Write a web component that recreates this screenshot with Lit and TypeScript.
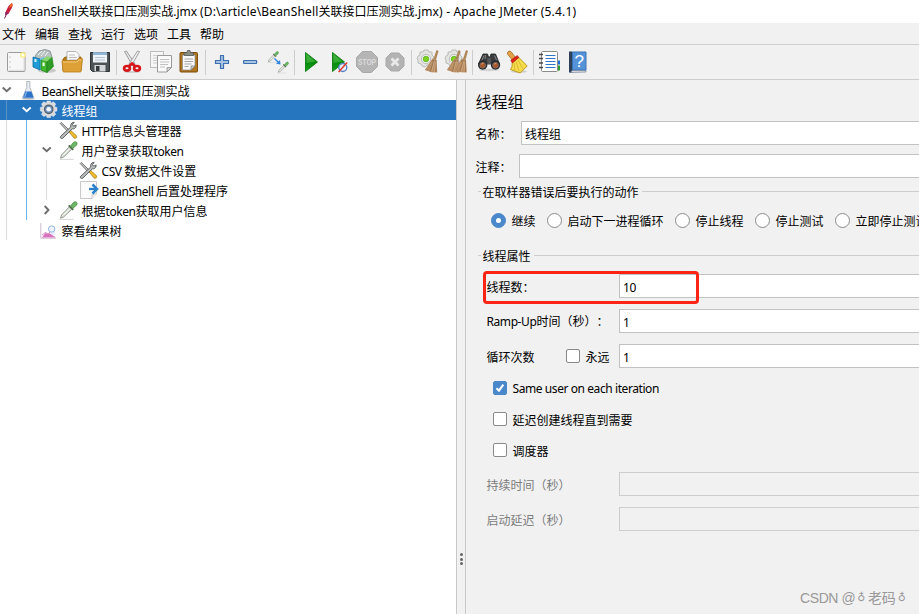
import { LitElement, html, svg, css, nothing } from "lit";
import { customElement, property } from "lit/decorators.js";
import { classMap } from "lit/directives/class-map.js";

/* Latin runs get their own span so that tracking never touches the CJK grid. */
const mix = (s: string) =>
  s.split(/([\x20-\x7e]+)/).filter(Boolean).map((p) => (/^[\x20-\x7e]/.test(p) ? html`<span class="lat">${p}</span>` : p));

const gear = svg`
  <path d="M4 8l2-1 0-3 3 0 1-2 4 0 1 2 3 0 0 3 2 2-1 4-2 1-1 3-3 0-2 2-3-1-1-2-3-1 0-3-1-1z" fill="#e3e3e1" stroke="#b0b0ae" stroke-width=".8"/>
  <circle cx="12" cy="11" r="4.600" fill="#f6f6f5" stroke="#a9a9a7" stroke-width=".7"/>
  <circle cx="12" cy="11" r="2.800" fill="#7ed321" stroke="#5db01c" stroke-width=".8"/>`;
const brush = (dx: number) => svg`<g transform="translate(${dx} 0)">
  <path d="M22.600 2.500l1.600.5-2.400 8.500-2-.5z" fill="#b58a55" stroke="#8a6437" stroke-width=".4"/>
  <path d="M18.500 10.500l4 1.200.8 12.800-6-.3-6.500-2.200z" fill="#b98e64"/>
  <path d="M18.800 12l-5.400 10.200M19.900 12l-3.600 11.400M21.900 12l-.2 11.800" stroke="#86623d" stroke-width=".6" fill="none"/>
  <path d="M18 13.800l-4.200 7.800M20.300 13l-2.500 10.400M21.500 14l-1 9.600" stroke="#d9b88f" stroke-width=".6" fill="none"/></g>`;
const pipette = (t: string) => svg`<g transform=${t}>
  <path d="M1 19.400h14" stroke="#cbcbcb" stroke-width=".8"/>
  <path d="M2 18.200l1-3.200L11 6.600l2.400 2.400L5.200 17z" fill="#d9dfd6" stroke="#8c938a" stroke-width=".9"/>
  <path d="M4.500 15.500l6-6.200" stroke="#fff" stroke-width="1"/>
  <path d="M10.200 5.400l4.500 4.500" stroke="#4d6a4b" stroke-width="1.700"/>
  <path d="M12 6l3.200-3.800q1.700-1 2.800 0 1.200 1.200 0 3L14.300 8.300z" fill="#6db865" stroke="#478a42" stroke-width=".8"/></g>`;
const play = svg`<path d="M8.500 4.500L20.500 14 8.500 23.500z" fill="url(#pg)" stroke="#0c7a12" stroke-width=".9"/>
  <path d="M9.500 6.500L18.500 13.600 9.500 15z" fill="#55c04e" opacity=".55"/>`;

const icons: Record<string, unknown> = {
  new: svg`<rect x="5.500" y="4.500" width="17.500" height="19" rx="1" fill="#f7f7f7" stroke="#9b9b9b"/>
    <path d="M6.500 22.300h15.500v-16" stroke="#dedede" fill="none"/>
    <circle cx="8" cy="9" r=".7" fill="#bbb"/><circle cx="8" cy="14" r=".7" fill="#bbb"/><circle cx="8" cy="19" r=".7" fill="#bbb"/>
    <circle cx="21" cy="7" r="3" fill="#fbee7a" opacity=".85"/><circle cx="21" cy="7" r="1.500" fill="#fffef0"/>`,
  templates: svg`<ellipse cx="17" cy="22.500" rx="9" ry="2.300" fill="#c9c9c9"/>
    <path d="M5 8l4-5 6-1.500 5 1.500 2 6-5 5-9-1z" fill="#b9c1c1" stroke="#7f8b8b" stroke-width=".8"/>
    <path d="M8 7l4-4M11 8l4-5M15 8l3-4" stroke="#eef2f2"/>
    <path d="M3 9l7 2v11l-7-3z" fill="#1f9bd6" stroke="#0f6da3" stroke-width=".8"/>
    <path d="M10 11l4-2v11l-4 2z" fill="#56bdea"/>
    <rect x="4.500" y="11" width="2" height="3" fill="#d9f1fb"/>
    <path d="M11 12l6 1.500v11L11 22z" fill="#42b82d" stroke="#23871a" stroke-width=".8"/>
    <path d="M17 13.500L22 9l1.500 9.500-6.500 6z" fill="#2f9d25" stroke="#237c1b" stroke-width=".6"/>
    <path d="M11 12l6-3.500 5 .5-5 4.500z" fill="#86d86c"/>
    <rect x="12.500" y="14.500" width="2.200" height="3.500" fill="#eaf8e4"/>`,
  open: svg`<path d="M5 11l2-2h16v14H5z" fill="#b77a14" stroke="#8f5d0b" stroke-width=".8"/>
    <path d="M9 3.500h9l3 3V16H9z" fill="#fafafa" stroke="#a4a4a4" stroke-width=".8"/>
    <path d="M11 7h6M11 9.500h8M11 12h8" stroke="#b8b8b8" stroke-width=".9"/>
    <path d="M4.500 12.500h14l2-2h3.500q.6 0 .5.800l-1.500 12q-.1.700-.8.700H5.700q-.6 0-.7-.7L4 13.200q0-.7.500-.7z" fill="#dda138" stroke="#b67b17" stroke-width=".8"/>
    <path d="M5 14h14l2-2h2.500" stroke="#f3cc80" stroke-width=".9" fill="none"/>`,
  save: svg`<path d="M4.500 4.500h19v19H6.500l-2-2z" fill="#4e5356" stroke="#2e3336"/>
    <rect x="7" y="4.500" width="14" height="10" fill="#eef4f9"/><rect x="7" y="4.500" width="14" height="2.500" fill="#8fb7da"/>
    <path d="M9 9.500h10M9 12h10" stroke="#b7c3cd"/>
    <rect x="8.500" y="17" width="11" height="6.500" fill="#d5d7d8"/><rect x="10" y="18" width="3.500" height="5" fill="#33383b"/>`,
  cut: svg`<ellipse cx="13" cy="24" rx="8" ry="1" fill="#d0d0d0"/>
    <path d="M5.500 3.500l2-.5 8.500 13-2.300 2z" fill="#e4e4e4" stroke="#8b8b8b" stroke-width=".8"/>
    <path d="M20.500 3.500l-2-.5-8.500 13 2.300 2z" fill="#f2f2f2" stroke="#8b8b8b" stroke-width=".8"/>
    <ellipse cx="8" cy="20.300" rx="2.900" ry="2.300" fill="none" stroke="#d5161b" stroke-width="2.700"/>
    <ellipse cx="18" cy="20.300" rx="2.900" ry="2.300" fill="none" stroke="#d5161b" stroke-width="2.700"/>
    <path d="M10 18l3-2.500 3 2.500" fill="none" stroke="#d5161b" stroke-width="2.500"/>`,
  copy: svg`<rect x="3.500" y="3.500" width="13" height="16" fill="#f6f6f6" stroke="#bdbdbd"/>
    <path d="M6 7.500h7M6 10h4M6 12.500h4M6 15h4" stroke="#cfcfcf"/>
    <path d="M10.500 7.500h14v12l-4.500 4.500h-9.500z" fill="#fafafa" stroke="#9a9a9a"/>
    <path d="M13 11.500h9M13 14h9M13 16.500h8M13 19h5" stroke="#c0c0c0"/><path d="M24.500 19.500H20V24z" fill="#d6d6d6" stroke="#8f8f8f" stroke-width=".8"/>`,
  paste: svg`<rect x="5" y="4.500" width="17.500" height="19.500" rx="1" fill="#b0761d" stroke="#7c4d0c"/>
    <path d="M7.500 7h12.500v11l-4 4H7.500z" fill="#f8f8f8" stroke="#8a8a8a" stroke-width=".7"/>
    <path d="M9.500 11h8.500M9.500 13.500h8.500M9.500 16h7M9.500 18.500h4" stroke="#a5a5a5"/><path d="M20 18h-4v4z" fill="#d2d2d2" stroke="#777" stroke-width=".7"/>
    <path d="M9 7.500V5l3-.5.5-2h2.500l.5 2 3 .5v2.500z" fill="#898d86" stroke="#565a54" stroke-width=".8"/>`,
  plus: svg`<path d="M12.500 7.500h3v5h5v3h-5v5h-3v-5h-5v-3h5z" fill="#a6c4e4" stroke="#3d6fae" stroke-width="1.200" stroke-linejoin="round"/>`,
  minus: svg`<rect x="7.600" y="12.500" width="13" height="3" rx=".5" fill="#a6c4e4" stroke="#3d6fae" stroke-width="1.200"/>`,
  toggle: svg`${pipette("translate(3 2.500) scale(.62)")}${pipette("translate(13 13) scale(.62)")}
    <path d="M10.500 10.500l4 4" stroke="#3386df" stroke-width="1.500"/><path d="M16.500 16.500l-.5-4.500-4 3.800z" fill="#3386df"/>`,
  play,
  playNo: svg`<g transform="translate(-1 0)">${play}</g><circle cx="17.800" cy="19.500" r="4" fill="#e8edf8" fill-opacity=".9" stroke="#5b83c5" stroke-width="1.400"/><path d="M13.600 24l8.500-9.500" stroke="#e23a30" stroke-width="1.500"/>`,
  stop: svg`<path d="M9.500 3.500h9l6 6v9l-6 6h-9l-6-6v-9z" fill="#b5b5b5" stroke="#a9a9a9"/>
    <text x="14" y="17.300" text-anchor="middle" textLength="18" lengthAdjust="spacingAndGlyphs" font-family="Liberation Sans, sans-serif" font-weight="700" font-size="9" fill="#dadada">STOP</text>`,
  shutdown: svg`<path d="M10 5h8l5 5v8l-5 5h-8l-5-5v-8z" fill="#b3b3b3" stroke="#a9a9a9"/><path d="M10.500 10.500l7 7M17.500 10.500l-7 7" stroke="#e9e9e9" stroke-width="2.800"/>`,
  clear: svg`${gear}${brush(0)}`,
  clearAll: svg`${gear}${brush(-6)}${brush(1.500)}`,
  search: svg`<ellipse cx="14" cy="22" rx="10" ry="1.200" fill="#d2d2d2"/>
    <path d="M8 6h4.500l1 3h1.500l1-3h4.500l4 10H3.500z" fill="#3a3c3e" stroke="#1f2122" stroke-width=".8"/>
    <path d="M9 7.500l-3 7M19.500 7.500l3 7M10.500 7l-.5 4" stroke="#85898c" fill="none"/>
    <circle cx="7.700" cy="17" r="4.700" fill="#2a2b2d"/><circle cx="20.500" cy="17" r="4.700" fill="#2a2b2d"/>
    <circle cx="7.700" cy="17.300" r="2.900" fill="#a8582a" stroke="#777" stroke-width=".7"/><circle cx="20.500" cy="17.300" r="2.900" fill="#a8582a" stroke="#777" stroke-width=".7"/>
    <path d="M6.500 16.200l2-1M19.300 16.200l2-1" stroke="#e9a36f"/><rect x="12.300" y="10" width="3.500" height="6" fill="#55595c"/>`,
  reset: svg`<ellipse cx="16" cy="23.500" rx="8" ry="1.500" fill="#cfcfcf"/>
    <path d="M5 3.800q1.500-1.500 3.200 0l4.300 5.700-3 2.800L4.800 6.500q-1-1.500.2-2.700z" fill="#e0a34a" stroke="#a76c1e" stroke-width=".8"/>
    <path d="M9.200 14.800l6.500-5.300q4 3.500 8.500 8.500l-7 7-9.700-3.500q2.200-2.500 1.700-6.700z" fill="#f5dc4c" stroke="#b79413" stroke-width=".9"/>
    <path d="M11 15l1 7M13 13.500l3 9.500M15 12l5 9" stroke="#d0ae2a" stroke-width=".7"/>
    <path d="M7.800 12.300l6.500-4.800 1.500 2-6.500 5.500z" fill="#dd2418" stroke="#a8170e" stroke-width=".6"/>`,
  list: svg`<rect x="5.500" y="3.500" width="16" height="20" rx="1" fill="#fff" stroke="#8a8a8a"/>
    <path d="M9.500 7.500h10M9.500 10.500h10M9.500 13.500h10M9.500 16.500h10M9.500 19.500h10" stroke="#2e74c9" stroke-width="1.200"/>
    <path d="M3 6.500h4M3 10.500h4M3 15h4M3 19.500h4" stroke="#4b4b4b" stroke-width="1.500"/>
    <path d="M22 12.500h2v4h-2z" fill="#1e6dd0"/><path d="M22 17.500h2v5h-2z" fill="#2c9c31"/>`,
  help: svg`<rect x="5" y="3.500" width="3.500" height="21" fill="#2d4058"/><path d="M8.500 4h13.500v18H8.500z" fill="#5493d8" stroke="#3a72b5"/>
    <path d="M6 24.500l2.500-2H22v1.500z" fill="#dde2e8" stroke="#5b6f88" stroke-width=".6"/>
    <text x="15.300" y="19" text-anchor="middle" font-family="Liberation Sans, sans-serif" font-size="17" fill="#fff">?</text>`,
};

const tools = [
  ["new", "templates", "open", "save"],
  ["cut", "copy", "paste"],
  ["plus", "minus", "toggle"],
  ["play", "playNo", "stop", "shutdown"],
  ["clear", "clearAll"],
  ["search", "reset"],
  ["list", "help"],
];

const wrench = svg`<g transform="translate(-1.800 0)"><path d="M2 3.500l1-1L12 11l-1.500 1.500z" fill="#c9c9c9" stroke="#555" stroke-width=".8"/>
  <path d="M10.500 11.500l1.500-1.500 6 5.500q1 1.300 0 2.300t-2.300 0z" fill="#f0bd2f" stroke="#a87c10" stroke-width=".8"/>
  <path d="M2.500 16.300L12.500 7q-.5-3 1.500-4.300l2-.4-1.800 2.400 1.300 1.500 2.500-1.200q0 2.800-1.800 3.600-1 .5-2 .2L4.500 18.200q-1.200.7-2-.1t0-1.800z" fill="#b9bcbc" stroke="#4f5353" stroke-width=".9"/></g>`;

const treeIcons: Record<string, unknown> = {
  flask: svg`<ellipse cx="8" cy="19" rx="7" ry=".8" fill="#c8c8c8"/>
    <path d="M6.700 1.500h3.200v6l3.800 10q.2 1-.8 1H3.400q-1 0-.8-1l4.100-10z" fill="#e4eaf0" stroke="#a4adb6" stroke-width=".8"/>
    <path d="M5.200 11.500h6.200l2.200 6.200H3z" fill="#2c72c9"/><path d="M6.500 12l-1.800 5" stroke="#8cbcf0"/>`,
  group: svg`<path d="M7 1h3.400l.5 2.300 2.500-1.500 2.300 2.300-1.500 2.600 2.700.7v3.600l-2.700.7 1.500 2.600-2.300 2.300-2.500-1.500-.5 2.500H7l-.6-2.500-2.600 1.500-2.300-2.300L3 11.700.4 11V7.400L3 6.700 1.500 4.100l2.300-2.300 2.600 1.500z" fill="#d9dbdd" stroke="#f2f3f4" stroke-width=".5"/>
    <circle cx="8.700" cy="9.300" r="4.200" fill="#6d92c4" stroke="#59616b" stroke-width="1.300"/><circle cx="8.700" cy="9.300" r="2.300" fill="#f1f7fd"/>`,
  config: wrench,
  sampler: pipette("translate(-1.500 0)"),
  post: svg`<path d="M.5 1.500h16v12l-4.500 5H.5z" fill="#fbfbfb" stroke="#c3c3c3" stroke-width=".9"/><path d="M12 18.500v-4.500h4.500" fill="#eee" stroke="#c3c3c3" stroke-width=".8"/>
    <path d="M9 9h7" stroke="#2b7fcb" stroke-width="2.300"/><path d="M12.500 4.500l4.500 4.500-4.500 4.500" fill="none" stroke="#2b7fcb" stroke-width="2.500"/>`,
  chart: svg`<path d="M.8 3v15.200H16" fill="none" stroke="#c9b3c9" stroke-width=".9"/>
    <path d="M2 16.500l4-4.500 3 2 5-5 1.500 6z" fill="#e6eefb"/><circle cx="11.700" cy="9" r="3.200" fill="#eef4fd" stroke="#94b4e4" stroke-width="1"/>
    <path d="M2 17.500l3.500-4.500 2.500 1.200 1.500-1 3 2 3.500 2.300z" fill="#d873bb"/><path d="M2 15l3.500-2.500 2.500 1.500 2-2" stroke="#d873bb" fill="none" stroke-width=".8"/>`,
};

interface Row { text: string; icon: string; guides: string[]; arrow?: "open" | "closed"; sel?: boolean }
const rows: Row[] = [
  { text: "BeanShell关联接口压测实战", icon: "flask", guides: [], arrow: "open" },
  { text: "线程组", icon: "group", guides: ["grey"], arrow: "open", sel: true },
  { text: "HTTP信息头管理器", icon: "config", guides: ["grey", "blue"] },
  { text: "用户登录获取token", icon: "sampler", guides: ["grey", "blue"], arrow: "open" },
  { text: "CSV 数据文件设置", icon: "config", guides: ["grey", "blue", "grey"] },
  { text: "BeanShell 后置处理程序", icon: "post", guides: ["grey", "blue", "grey"] },
  { text: "根据token获取用户信息", icon: "sampler", guides: ["grey", "blue"], arrow: "closed" },
  { text: "察看结果树", icon: "chart", guides: ["grey"] },
];

const base = css`
  * { box-sizing: border-box; }
  svg { display: block; flex: none; }
  .lat { font-family: "Noto Sans", "Open Sans", sans-serif; white-space: pre; letter-spacing: var(--track, -0.420px); }
`;

@customElement("jm-toolbar")
export class JmToolbar extends LitElement {
  static styles = [base, css`
    :host { display: flex; align-items: center; height: 36px; padding-left: 2px; border-top: 1px solid #cdcdcd; border-bottom: 1px solid #cdcdcd; }
    .sep { width: 1px; height: 25px; margin: 0 2px; background: #cdcdcd; flex: none; }
  `];
  render() {
    return tools.map((g, i) => html`${i ? html`<span class="sep"></span>` : nothing}${g.map((n) => html`
      <svg width="28" height="28" viewBox="0 0 28 28">
        <defs><linearGradient id="pg" x1="0" y1="0" x2="0" y2="1"><stop offset="0" stop-color="#35a935"/><stop offset=".55" stop-color="#068a0b"/><stop offset="1" stop-color="#19a51d"/></linearGradient></defs>
        ${icons[n]}
      </svg>`)}`);
  }
}

@customElement("jm-tree")
export class JmTree extends LitElement {
  static styles = [base, css`
    :host { display: block; width: 456px; background: #fff; flex: none; }
    .row { display: flex; height: 20px; align-items: center; }
    .sel { background: #2675bf; color: #fff; }
    .cell { width: 20px; height: 20px; flex: none; padding-left: 6px; }
    .grey::before, .blue::before { content: ""; display: block; width: 1px; height: 20px; background: #dadada; }
    .blue::before { background: #6db3ec; }
    .sel .grey::before { background: #5b93c6; }
    .arrow { width: 20px; flex: none; }
    .icon { width: 21.500px; flex: none; }
    .label { white-space: nowrap; height: 20px; padding-top: 2px; line-height: 18px; }
  `];
  render() {
    return rows.map((r) => html`<div class=${classMap({ row: true, sel: !!r.sel })}>
      ${r.guides.map((g) => html`<span class="cell ${g}"></span>`)}
      <svg class="arrow" width="20" height="20" viewBox="0 0 20 20">
        ${r.arrow ? svg`<path d=${r.arrow === "open" ? "M2.700 7.500l4 3.800L10.700 7.500" : "M4.700 6l3.800 4-3.800 4"} fill="none" stroke=${r.sel ? "#fff" : "#6e6e6e"} stroke-width="1.900"/>` : nothing}
      </svg>
      <svg class="icon" height="20" viewBox="0 0 21.500 20" overflow="visible">${treeIcons[r.icon]}</svg>
      <span class="label">${mix(r.text)}</span>
    </div>`);
  }
}

@customElement("jm-check")
export class JmCheck extends LitElement {
  @property() label = "";
  @property({ type: Boolean }) on = false;
  @property({ type: Boolean }) radio = false;
  static styles = [base, css`
    :host { display: flex; align-items: center; gap: 6px; white-space: nowrap; flex: none; }
    .box { width: 14px; height: 14px; background: #fff; border: 1px solid #8a8a8a; border-radius: 2px; flex: none; }
    .dot { width: 15px; height: 15px; border-radius: 50%; display: flex; align-items: center; justify-content: center; }
    .on { background: #4a88cb; border-color: #4a88cb; }
    .dot.on::after { content: ""; width: 5px; height: 5px; border-radius: 50%; background: #fff; }
    .txt { line-height: 18px; padding-top: 2px; margin-left: -0.500px; }
  `];
  render() {
    return html`<span class=${classMap({ box: true, dot: this.radio, on: this.on })}>
      ${this.on && !this.radio ? svg`<svg width="12" height="12" viewBox="0 0 12 12"><path d="M2.500 6.200l2.500 2.500 4.300-6" fill="none" stroke="#fff" stroke-width="2"/></svg>` : nothing}</span>
      <span class="txt">${mix(this.label)}</span>`;
  }
}

@customElement("jm-panel")
export class JmPanel extends LitElement {
  static styles = [base, css`
    :host { display: block; flex: 1; min-width: 0; overflow: hidden; border-left: 1px solid #c8c8c8; padding: 9px 0 0 10px; white-space: nowrap; }
    h1 { margin: 0 0 0 -0.500px; font-size: 16px; font-weight: 350; line-height: 24px; height: 32px; }
    .field { display: flex; height: 24px; margin-bottom: 9px; align-items: center; line-height: 20px; }
    .name { width: 45px; flex: none; padding-top: 1px; text-indent: -0.500px; }
    .name.short { width: 43px; }
    .input { flex: 1; height: 24px; background: #fff; border: 1px solid #c2c2c2; border-right: 0; padding: 2px 0 0 3px; line-height: 20px; }
    .group .input { line-height: 19px; }
    .off { color: #7d7d7d; }
    .off .input { background: #f1f1f1; border-color: #cdcdcd; }
    .legend { display: flex; align-items: center; height: 18px; padding-left: 2px; }
    .legend.first { margin-top: -5px; }
    .legend span { padding-top: 2px; margin-left: -0.500px; }
    .legend::before { content: ""; width: 3px; height: 1px; background: #cdcdcd; margin-right: 2px; }
    .legend::after { content: ""; flex: 1; height: 1px; background: #cdcdcd; margin-left: 3px; }
    .radios { display: flex; gap: 11.500px; padding: 10px 0 0 15px; height: 46px; align-items: flex-start; }
    .group { position: relative; padding: 10px 0 0 11px; }
    .group .field { margin-bottom: 11px; }
    .group .name { width: 132px; display: flex; justify-content: space-between; padding-right: 9.500px; }
    .name jm-check { text-indent: 0; height: 18px; }
    .checks { display: flex; flex-direction: column; padding: 0 0 0 6px; height: 100px; margin-top: -7px; }
    .checks jm-check { height: 31px; }
    .mark { position: absolute; left: 7px; top: 7px; width: 216px; height: 33px; border: 3px solid #fc2415; border-radius: 4px; }
  `];
  render() {
    return html`
      <h1>线程组</h1>
      <div class="field"><span class="name">名称：</span><span class="input">线程组</span></div>
      <div class="field"><span class="name short">注释：</span><span class="input"></span></div>
      <div class="legend first"><span>在取样器错误后要执行的动作</span></div>
      <div class="radios">
        ${["继续", "启动下一进程循环", "停止线程", "停止测试", "立即停止测试"].map((l, i) => html`<jm-check radio ?on=${i === 0} .label=${l}></jm-check>`)}
      </div>
      <div class="legend"><span>线程属性</span></div>
      <div class="group">
        <div class="field"><span class="name">线程数：</span><span class="input">${mix("10")}</span></div>
        <div class="field"><span class="name"><span>${mix("Ramp-Up时间（秒）：")}</span></span><span class="input">${mix("1")}</span></div>
        <div class="field"><span class="name">循环次数<jm-check label="永远"></jm-check></span><span class="input">${mix("1")}</span></div>
        <div class="checks">
          <jm-check on label="Same user on each iteration"></jm-check>
          <jm-check label="延迟创建线程直到需要"></jm-check>
          <jm-check label="调度器"></jm-check>
        </div>
        <div class="field off"><span class="name">持续时间（秒）</span><span class="input"></span></div>
        <div class="field off"><span class="name">启动延迟（秒）</span><span class="input"></span></div>
        <div class="mark"></div>
      </div>`;
  }
}

@customElement("app-root")
export class AppRoot extends LitElement {
  static styles = [base, css`
    :host { display: flex; flex-direction: column; position: relative; width: 919px; height: 614px; overflow: hidden; background: #f1f1f1; color: #000;
      font: 12px/18px "Noto Sans CJK SC", sans-serif; text-spacing-trim: space-all; }
    .title { display: flex; height: 23px; background: #fff; padding-left: 2px; gap: 4px; line-height: 22px; --track: 0.170px; white-space: nowrap; }
    .title .head { --track: -0.050px; }
    .menu { display: flex; height: 21px; gap: 9px; padding-left: 2px; line-height: 22px; }
    .main { display: flex; flex: 1; min-height: 0; }
    .split { width: 9px; border-left: 1px solid #c8c8c8; display: flex; flex-direction: column; align-items: center; gap: 1.500px; padding-top: 473px; }
    .split i { width: 3px; height: 3px; border-radius: 50%; background: #666; flex: none; }
    .water { position: absolute; left: 800px; top: 589px; display: flex; font-size: 14px; line-height: 18px; color: #999; font-family: "Liberation Sans", "Noto Sans CJK SC", sans-serif; white-space: pre; }
    .water span:first-child { letter-spacing: -0.400px; }
    .water .sign { width: 13px; margin-left: -0.500px; text-align: center; font-family: "DejaVu Sans", sans-serif; font-size: 11px; }
  `];
  render() {
    return html`
      <div class="title">
        <svg width="16" height="22" viewBox="0 0 16 22"><path d="M2.500 18.500L6 11" stroke="#8a2a5b" stroke-width="1"/>
          <path d="M9.800 3q1.500 1.500 0 5L6.500 13.800 3.200 15.500 3.500 12 6.500 6z" fill="#c9203f"/><path d="M9.800 3q1.500 1.500.4 3.500L7 8 8 5z" fill="#ee6a24"/><path d="M3.400 12l3.500 1-3.700 2.500z" fill="#7d2a78"/></svg>
        <span><span class="head">${mix("BeanShell关联接口压测实战.jmx ")}</span>${mix("(D:\\article\\BeanShell关联接口压测实战.jmx) - Apache JMeter (5.4.1)")}</span>
      </div>
      <div class="menu">${["文件", "编辑", "查找", "运行", "选项", "工具", "帮助"].map((m) => html`<span>${m}</span>`)}</div>
      <jm-toolbar></jm-toolbar>
      <div class="main">
        <jm-tree></jm-tree>
        <div class="split"><i></i><i></i><i></i></div>
        <jm-panel></jm-panel>
      </div>
      <div class="water"><span>CSDN @</span><span class="sign">♁</span><span>老码</span><span class="sign">♁</span></div>`;
  }
}
